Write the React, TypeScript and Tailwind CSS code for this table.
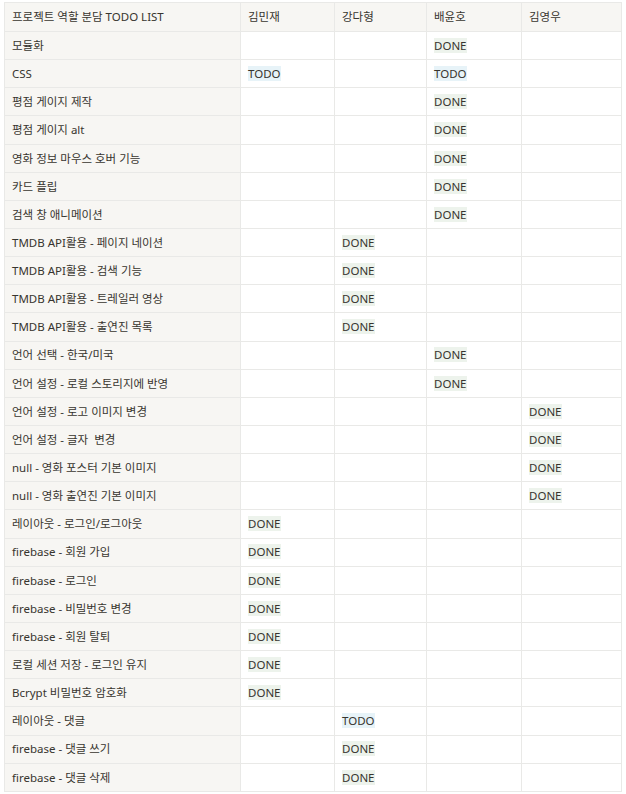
import React from "react";

type Status = "DONE" | "TODO" | "";
const rows: [string, Status, Status, Status, Status][] = [
  ["모듈화", "", "", "DONE", ""],
  ["CSS", "TODO", "", "TODO", ""],
  ["평점 게이지 제작", "", "", "DONE", ""],
  ["평점 게이지 alt", "", "", "DONE", ""],
  ["영화 정보 마우스 호버 기능", "", "", "DONE", ""],
  ["카드 플립", "", "", "DONE", ""],
  ["검색 창 애니메이션", "", "", "DONE", ""],
  ["TMDB API활용 - 페이지 네이션", "", "DONE", "", ""],
  ["TMDB API활용 - 검색 기능", "", "DONE", "", ""],
  ["TMDB API활용 - 트레일러 영상", "", "DONE", "", ""],
  ["TMDB API활용 - 출연진 목록", "", "DONE", "", ""],
  ["언어 선택 - 한국/미국", "", "", "DONE", ""],
  ["언어 설정 - 로컬 스토리지에 반영", "", "", "DONE", ""],
  ["언어 설정 - 로고 이미지 변경", "", "", "", "DONE"],
  ["언어 설정 - 글자\u00a0 변경", "", "", "", "DONE"],
  ["null - 영화 포스터 기본 이미지", "", "", "", "DONE"],
  ["null - 영화 출연진 기본 이미지", "", "", "", "DONE"],
  ["레이아웃 - 로그인/로그아웃", "DONE", "", "", ""],
  ["firebase - 회원 가입", "DONE", "", "", ""],
  ["firebase - 로그인", "DONE", "", "", ""],
  ["firebase - 비밀번호 변경", "DONE", "", "", ""],
  ["firebase - 회원 탈퇴", "DONE", "", "", ""],
  ["로컬 세션 저장 - 로그인 유지", "DONE", "", "", ""],
  ["Bcrypt 비밀번호 암호화", "DONE", "", "", ""],
  ["레이아웃 - 댓글", "", "TODO", "", ""],
  ["firebase - 댓글 쓰기", "", "DONE", "", ""],
  ["firebase - 댓글 삭제", "", "DONE", "", ""],
];

function Tag({ s }: { s: Status }) {
  if (!s) return null;
  return (
    <span
      className={
        s === "DONE"
          ? "bg-[#edf3ec] px-[0px] leading-[15px] inline-block"
          : "bg-[#e7f3f8] px-[0px] leading-[15px] inline-block"
      }
    >
      {s}
    </span>
  );
}

export default function App() {
  return (
    <div className="bg-white pt-[2px] pl-[4px] font-['Noto_Sans','Noto_Sans_CJK_KR',sans-serif] text-[11.5px] text-[#37352f]">
      <table className="table-fixed border-collapse w-[617px]">
        <colgroup>
          <col className="w-[236px]" />
          <col className="w-[94px]" />
          <col className="w-[92px]" />
          <col className="w-[95px]" />
          <col className="w-[100px]" />
        </colgroup>
        <thead>
          <tr className="h-[29px] bg-[#f7f6f3]">
            {["프로젝트 역할 분담 TODO LIST", "김민재", "강다형", "배윤호", "김영우"].map((h, i) => (
              <th
                key={i}
                className="border border-[#e9e9e7] px-[7px] py-0 text-left font-normal align-middle whitespace-nowrap"
              >
                {h}
              </th>
            ))}
          </tr>
        </thead>
        <tbody>
          {rows.map((r, ri) => (
            <tr key={ri} className="h-[28.15px]">
              <td className="border border-[#e9e9e7] bg-[#f7f6f3] px-[7px] py-0 align-middle whitespace-nowrap">
                {r[0]}
              </td>
              {r.slice(1).map((c, ci) => (
                <td
                  key={ci}
                  className="border border-[#e9e9e7] px-[7px] py-0 align-middle whitespace-nowrap"
                >
                  <Tag s={c as Status} />
                </td>
              ))}
            </tr>
          ))}
        </tbody>
      </table>
    </div>
  );
}
